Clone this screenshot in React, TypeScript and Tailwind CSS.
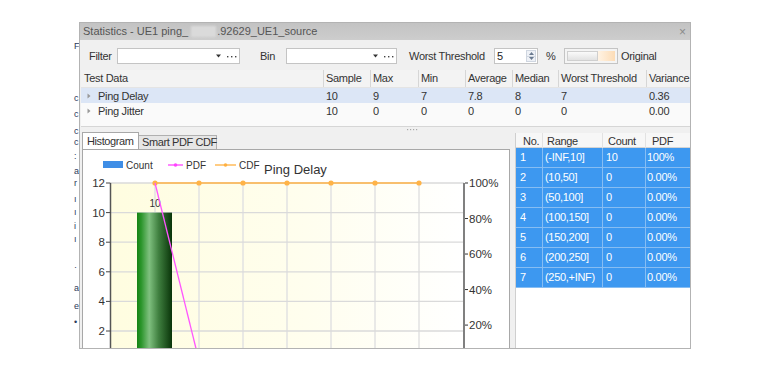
import React from "react";

const frags: [number, string][] = [
  [47, "F"], [99, "c"], [115, "c"], [132, "c"], [143, "c"], [157, ":"], [172, "a"], [184, "r"],
  [200, "ı"], [213, "ı"], [227, "i"], [240, "ı"], [268, "·"], [289, "a"], [307, "e"], [323, "•"],
];

const headers = ["Test Data", "Sample", "Max", "Min", "Average", "Median", "Worst Threshold", "Variance"];
const rows = [
  ["Ping Delay", "10", "9", "7", "7.8", "8", "7", "0.36"],
  ["Ping Jitter", "10", "0", "0", "0", "0", "0", "0.00"],
];
const bins = [
  ["1", "(-INF,10]", "10", "100%"],
  ["2", "(10,50]", "0", "0.00%"],
  ["3", "(50,100]", "0", "0.00%"],
  ["4", "(100,150]", "0", "0.00%"],
  ["5", "(150,200]", "0", "0.00%"],
  ["6", "(200,250]", "0", "0.00%"],
  ["7", "(250,+INF)", "0", "0.00%"],
];

function Combo({ w }: { w: string }) {
  return (
    <div className={w + " h-[16px] bg-white border border-[#c4c4c4] flex items-center justify-end pr-[2px]"}>
      <svg width="21" height="4" className="block">
        <path d="M0 0.5H5L2.5 3.5Z" fill="#333" />
        <rect x="11" y="2" width="1.4" height="1.4" fill="#444" />
        <rect x="15" y="2" width="1.4" height="1.4" fill="#444" />
        <rect x="19" y="2" width="1.4" height="1.4" fill="#444" />
      </svg>
    </div>
  );
}

function Spinner() {
  return (
    <div className="w-[44px] h-[16px] bg-white border border-[#c4c4c4] flex items-stretch">
      <span className="flex-1 pl-[2px] leading-[14px] text-[11px] text-[#222]">5</span>
      <div className="w-[10px] mr-[1px] my-[1px] flex flex-col border border-[#cfd6e0] bg-[#eef1f6]">
        <div className="flex-1 flex items-center justify-center border-b border-[#cfd6e0]">
          <svg width="5" height="3" className="block"><path d="M0 3H5L2.5 0Z" fill="#6a7a90" /></svg>
        </div>
        <div className="flex-1 flex items-center justify-center">
          <svg width="5" height="3" className="block"><path d="M0 0H5L2.5 3Z" fill="#6a7a90" /></svg>
        </div>
      </div>
    </div>
  );
}

function Toggle() {
  return (
    <div className="w-[54px] h-[16px] bg-[#f4f4f4] border border-[#c4c4c4] flex p-[2px]">
      <div className="w-[31px] bg-linear-to-b from-[#fafafa] to-[#e2e2e2] border border-[#cfcfcf]" />
      <div className="flex-1 bg-linear-to-r from-[#fff3e4] to-[#fcdcb6]" />
    </div>
  );
}

function Chart() {
  const yv = (v: number) => 33 + (12 - v) * 14.8;
  const yp = (p: number) => 33 + (100 - p) * 1.776;
  const gx = [72, 116, 160, 204, 248, 292, 336];
  const ff = "Liberation Sans, Arial, sans-serif";
  return (
    <svg width="426" height="198" className="block" fontFamily={ff}>
      <defs>
        <linearGradient id="plotbg" x1="0" x2="1" y1="0" y2="0">
          <stop offset="0" stopColor="#fffde0" />
          <stop offset="0.55" stopColor="#fffeee" />
          <stop offset="1" stopColor="#ffffff" />
        </linearGradient>
        <linearGradient id="bar" x1="0" x2="1" y1="0" y2="0">
          <stop offset="0" stopColor="#148414" />
          <stop offset="0.12" stopColor="#2b952b" />
          <stop offset="0.35" stopColor="#7fc07f" />
          <stop offset="0.62" stopColor="#3f7f3f" />
          <stop offset="1" stopColor="#093409" />
        </linearGradient>
      </defs>
      {/* legend */}
      <rect x="20" y="11" width="20" height="7" fill="#3f8ee6" />
      <text x="43" y="18.5" fontSize="10" fill="#333">Count</text>
      <line x1="85" y1="15" x2="100" y2="15" stroke="#ff44ff" strokeWidth="1.3" />
      <circle cx="92.5" cy="15" r="1.8" fill="#ff44ff" />
      <text x="103" y="18.5" fontSize="10" fill="#333">PDF</text>
      <line x1="132" y1="15" x2="153" y2="15" stroke="#ffb040" strokeWidth="1.3" />
      <circle cx="142.5" cy="15" r="1.8" fill="#ffb040" />
      <text x="156" y="18.5" fontSize="10" fill="#333">CDF</text>
      <text x="181" y="23.5" fontSize="13" fill="#333">Ping Delay</text>
      {/* plot */}
      <rect x="28" y="33" width="353" height="180" fill="url(#plotbg)" />
      {gx.map((x) => (
        <line key={x} x1={x} y1="33" x2={x} y2="198" stroke="#e2e2e2" strokeWidth="1.5" />
      ))}
      {[12, 10, 8, 6, 4, 2].map((v) => (
        <line key={v} x1="28" y1={yv(v)} x2="381" y2={yv(v)} stroke="#dadada" strokeWidth="1.3" />
      ))}
      <rect x="54" y={yv(10)} width="35" height="200" fill="url(#bar)" />
      <text x="72" y={yv(10) - 6} fontSize="10" fill="#333" textAnchor="middle">10</text>
      <line x1="72" y1="33" x2="336" y2="33" stroke="#ffb347" strokeWidth="1.5" />
      {gx.map((x) => (
        <circle key={x} cx={x} cy="33" r="2.6" fill="#ffb347" />
      ))}
      <line x1="72" y1="33" x2="116" y2="210.6" stroke="#ff55ff" strokeWidth="1.3" />
      {/* left axis */}
      <line x1="27.5" y1="33" x2="27.5" y2="198" stroke="#555" strokeWidth="1.5" />
      {[12, 10, 8, 6, 4, 2].map((v) => (
        <g key={v}>
          <line x1="23" y1={yv(v)} x2="27.5" y2={yv(v)} stroke="#444" strokeWidth="1" />
          <text x="22" y={yv(v) + 4} fontSize="11.5" fill="#333" textAnchor="end">{v}</text>
        </g>
      ))}
      {/* right axis */}
      <line x1="381" y1="33" x2="381" y2="198" stroke="#808080" strokeWidth="2" />
      {[100, 80, 60, 40, 20].map((p) => (
        <g key={p}>
          <line x1="382" y1={yp(p)} x2="385" y2={yp(p)} stroke="#333" strokeWidth="1" />
          <text x="386" y={yp(p) + 4} fontSize="11.5" fill="#333">{p}%</text>
        </g>
      ))}
    </svg>
  );
}

export default function App() {
  const cols = "grid grid-cols-[242px_47px_48px_47px_47px_46px_88px_44px]";
  return (
    <div className="relative w-[768px] h-[372px] overflow-hidden bg-white font-['Liberation_Sans',Arial,sans-serif] text-[#333]">
      {frags.map(([y, c]) => (
        <span key={y} className="absolute left-[74px] text-[9px] leading-none text-[#2b3a5a]" style={{ top: y - 5 }}>
          {c}
        </span>
      ))}
      <div className="absolute left-[79px] top-[22px] w-[612px] h-[327px] border border-[#b3b3b3] flex flex-col bg-[#f0f0f0] z-10">
        {/* title bar */}
        <div className="h-[17px] bg-linear-to-b from-[#c3c3c3] to-[#cdcdcd] flex items-center pl-[3px] pr-[4px] text-[11px] text-[#555] whitespace-nowrap">
          <span>Statistics - UE1 ping_</span>
          <span className="inline-block w-[25px] h-[11px] bg-[#dadada] blur-[1px] ml-[3px] mr-[1px]" />
          <span>.92629_UE1_source</span>
          <span className="ml-auto text-[#8a8a8a] text-[12px] leading-none">×</span>
        </div>
        {/* toolbar */}
        <div className="h-[30px] pt-[2px] flex items-center pl-[9px] text-[11px] tracking-[-0.3px] whitespace-nowrap">
          <span className="w-[28px]">Filter</span>
          <Combo w="w-[123px]" />
          <span className="ml-[20px] w-[26px]">Bin</span>
          <Combo w="w-[111px]" />
          <span className="ml-[12px] w-[85px]">Worst Threshold</span>
          <Spinner />
          <span className="ml-[8px] w-[18px]">%</span>
          <Toggle />
          <span className="ml-[3px]">Original</span>
        </div>
        {/* data grid */}
        <div className="ml-[1px] h-[57px] bg-[#fafafa] border-b border-[#d6d6d6] text-[11px] tracking-[-0.3px] whitespace-nowrap">
          <div className={cols + " h-[18px] bg-[#f3f3f3] border-b border-[#e4e4e4]"}>
            {headers.map((h, i) => (
              <div
                key={h}
                className={"flex items-center overflow-hidden " + (i > 0 ? "pl-[2px] border-l border-[#d6d6d6]" : "pl-[3px]")}
              >
                {h}
              </div>
            ))}
          </div>
          {rows.map((r, ri) => (
            <div key={r[0]} className={cols + " h-[15px] " + (ri === 0 ? "bg-[#dce6f6]" : "")}>
              <div className="flex items-center pl-[6px]">
                <svg width="4" height="6" className="block">
                  <path d="M0.5 0.5L3.5 3L0.5 5.5Z" fill="#999" />
                </svg>
                <span className="ml-[7px]">{r[0]}</span>
              </div>
              {r.slice(1).map((c, ci) => (
                <div key={ci} className="flex items-center pl-[3px]">
                  {c}
                </div>
              ))}
            </div>
          ))}
        </div>
        {/* splitter */}
        <div className="h-[5px] pl-[327px] flex items-center">
          <svg width="12" height="2" className="block">
            {[0, 3, 6, 9].map((x) => (
              <rect key={x} x={x} y="0" width="1.2" height="1.2" fill="#a8a8a8" />
            ))}
          </svg>
        </div>
        {/* bottom section */}
        <div className="flex h-[216px]">
          <div className="ml-[2px] w-[428px] flex flex-col">
            <div className="h-[17px] flex items-end text-[11px] tracking-[-0.4px] whitespace-nowrap">
              <div className="w-[57px] h-[17px] bg-white border border-b-0 border-[#a8a8a8] flex items-center pl-[4px]">
                Histogram
              </div>
              <div className="w-[78px] h-[14px] bg-[#e6e6e6] border border-l-0 border-b-0 border-[#b0b0b0] flex items-center pl-[3px]">
                Smart PDF CDF
              </div>
            </div>
            <div className="h-[199px] bg-white border border-b-0 border-[#a8a8a8] overflow-hidden">
              <Chart />
            </div>
          </div>
          <div className="ml-[5px] w-[175px] mt-[1px] bg-white border-l border-[#cfcfcf] text-[11px] tracking-[-0.3px] whitespace-nowrap">
            <div className="grid grid-cols-[26px_60px_43px_45px] h-[15px] bg-[#f7f7f7] border-b border-[#d4d4d4]">
              <div className="flex items-center pl-[7px]">No.</div>
              <div className="flex items-center pl-[4px] border-l border-[#e2e2e2]">Range</div>
              <div className="flex items-center pl-[5px] border-l border-[#e2e2e2]">Count</div>
              <div className="flex items-center pl-[6px] border-l border-[#e2e2e2]">PDF</div>
            </div>
            {bins.map((b) => (
              <div key={b[0]} className="grid grid-cols-[26px_60px_43px_45px] h-[20px] bg-[#3d98f0] text-white border-b border-[#86bdf3]">
                <div className="flex items-center pl-[4px]">{b[0]}</div>
                <div className="flex items-center pl-[2px] border-l border-[#86bdf3]">{b[1]}</div>
                <div className="flex items-center pl-[3px] border-l border-[#86bdf3]">{b[2]}</div>
                <div className="flex items-center pl-[1px] border-l border-[#86bdf3]">{b[3]}</div>
              </div>
            ))}
          </div>
        </div>
      </div>
    </div>
  );
}
